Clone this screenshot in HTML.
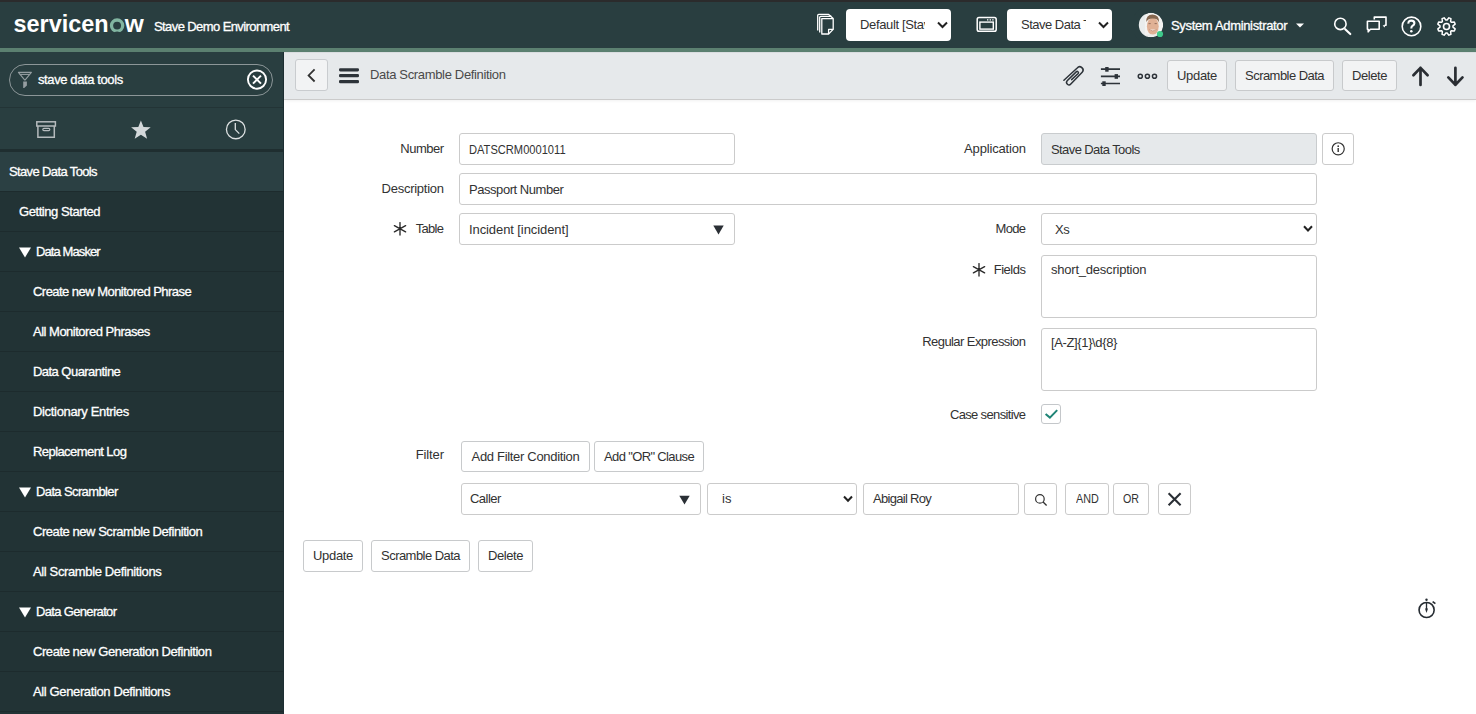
<!DOCTYPE html>
<html><head><meta charset="utf-8">
<style>
*{box-sizing:border-box;margin:0;padding:0}
html,body{width:1476px;height:714px;overflow:hidden;background:#fff;font-family:"Liberation Sans",sans-serif;font-size:13px;color:#323232}
.a{position:absolute}
.t{position:absolute;white-space:nowrap;letter-spacing:-0.5px;line-height:16px}
#strip{left:0;top:0;width:1476px;height:2px;background:#2b2b2c}
#hdr{left:0;top:2px;width:1476px;height:46px;background:#293e40}
#gline{left:0;top:48px;width:1476px;height:4px;background:#5b8070}
#side{left:0;top:52px;width:284px;height:662px;background:#293e40}
.sel{position:absolute;background:#fff;border-radius:4px;height:32px;top:7px;width:105px;overflow:hidden}
.sel span{position:absolute;top:8px;color:#323232}
.row{position:absolute;left:0;width:283px;height:40px;background:#223335;border-top:1px solid #1d2b2d}
.row span{position:absolute;top:12px;color:#fff;-webkit-text-stroke:0.3px #fff;white-space:nowrap;letter-spacing:-0.55px;line-height:16px}
#content{left:284px;top:52px;width:1192px;height:662px;background:#fff}
#chdr{left:0;top:0;width:1192px;height:48px;background:#e6e9eb;border-top:1px solid #dadde0;border-bottom:1px solid #cbcbcb;box-shadow:0 1px 3px rgba(0,0,0,.06)}
.btn{position:absolute;height:31px;border:1px solid #c8cacc;border-radius:3px;background:#fff;line-height:29px;text-align:center;white-space:nowrap;letter-spacing:-0.5px;color:#323232}
.hbtn{background:#f2f3f4}
.inp{position:absolute;height:32px;border:1px solid #cbcbcb;border-radius:3px;background:#fff}
.inp span{position:absolute;left:10px;top:7px;white-space:nowrap;letter-spacing:-0.5px;line-height:16px;color:#323232}
.lbl{position:absolute;white-space:nowrap;letter-spacing:-0.5px;line-height:16px;color:#323232;text-align:right}
</style></head><body>
<div id="strip" class="a"></div>
<div id="hdr" class="a"></div>
<svg class="a" style="left:0;top:0" width="300" height="48" viewBox="0 0 300 48">
  <text x="13.5" y="32" font-family="Liberation Sans" font-weight="700" font-size="24" fill="#fff" textLength="95" lengthAdjust="spacingAndGlyphs">servicen</text>
  <circle cx="117.1" cy="25.6" r="5.6" fill="none" stroke="#81b5a1" stroke-width="3.3"/>
  <ellipse cx="117.1" cy="33.4" rx="3.2" ry="1.9" fill="#293e40"/>
  <text x="124.8" y="32" font-family="Liberation Sans" font-weight="700" font-size="24" fill="#fff" textLength="19" lengthAdjust="spacingAndGlyphs">w</text>
</svg>
<span class="t" style="left:154px;top:19px;color:#fff;-webkit-text-stroke:0.3px #fff;letter-spacing:-0.59px">Stave Demo Environment</span>
<svg class="a" style="left:810px;top:8px" width="40" height="32" viewBox="810 8 40 32" fill="none" stroke="#fff" stroke-width="1.3" stroke-linejoin="round">
  <path d="M817.7 30.6 V15.4 Q817.7 14.4 818.7 14.4 H828.6 L831.3 16.6"/>
  <path d="M819.7 32.6 V17.2 Q819.7 16.3 820.7 16.3 H830.6 L833.2 18.6"/>
  <path d="M821.8 18.6 H833.2 V29.4 L828.6 34 H821.8 Z"/>
  <path d="M828.6 34 V29.4 H833.2"/>
</svg>
<div class="sel" style="left:846px;top:9px"><div class="a" style="left:14px;top:0;width:65px;height:32px;overflow:hidden"><span class="t" style="left:0;top:8px;letter-spacing:-0.35px;color:#323232">Default [Stave]</span></div>
  <svg class="a" style="left:91px;top:12px" width="11" height="8"><path d="M1 1.5 L5.5 6 L10 1.5" fill="none" stroke="#222" stroke-width="2"/></svg></div>
<svg class="a" style="left:970px;top:10px" width="32" height="28" viewBox="970 10 32 28" fill="none" stroke="#fff">
  <rect x="977.2" y="17.6" width="19" height="13.7" rx="1.8" stroke-width="1.5"/>
  <rect x="979.9" y="22.1" width="13.4" height="7" stroke-width="1.4"/>
  <path d="M987 19.8 h1.4 M989.6 19.8 h1.4 M992.2 19.8 h1.4" stroke-width="1.2"/>
</svg>
<div class="sel" style="left:1007px;top:9px"><div class="a" style="left:14px;top:0;width:65px;height:32px;overflow:hidden"><span class="t" style="left:0;top:8px;letter-spacing:-0.5px;color:#323232">Stave Data Tools</span></div>
  <svg class="a" style="left:91px;top:12px" width="11" height="8"><path d="M1 1.5 L5.5 6 L10 1.5" fill="none" stroke="#222" stroke-width="2"/></svg></div>
<svg class="a" style="left:1134px;top:8px" width="34" height="34" viewBox="1134 8 34 34">
    <circle cx="1151" cy="25" r="12.2" fill="#f4f3f1"/>
  <g>
    <path d="M1138 12 h7 v26 h-7z" fill="#e9ecec"/>
    <ellipse cx="1152.8" cy="26.3" rx="5.9" ry="8.6" fill="#e0b195"/>
    <path d="M1146.3 22 Q1145.8 15 1152.6 14.6 Q1159.6 15 1159.2 23 Q1158 18.6 1152.8 18.6 Q1148 18.6 1146.3 22z" fill="#86674f"/>
    <path d="M1148.5 23.6 h2.2 M1154.6 23.6 h2.2" stroke="#8d6a58" stroke-width="0.9"/>
    <path d="M1149 29.5 Q1152.8 32.5 1156.6 29.5" fill="#f4ece6" stroke="#c48d74" stroke-width="0.8"/>
    <path d="M1143 37 Q1145 33.5 1152.8 34.5 Q1160.5 33.5 1162 36z" fill="#ecebea"/>
  </g>
  <circle cx="1151" cy="25" r="15.7" fill="none" stroke="#293e40" stroke-width="7"/>
  <circle cx="1160" cy="34" r="3.1" fill="#3ec98a"/>
</svg>
<span class="t" style="left:1171px;top:18px;color:#fff;-webkit-text-stroke:0.3px #fff;letter-spacing:-0.33px">System Administrator</span>
<svg class="a" style="left:1295px;top:22px" width="10" height="8"><path d="M1 1.5 H9 L5 5.6z" fill="#fff"/></svg>
<svg class="a" style="left:1328px;top:12px" width="64" height="28" viewBox="1328 12 64 28" fill="none" stroke="#fff">
  <circle cx="1340.4" cy="23.9" r="5.7" stroke-width="1.6"/>
  <path d="M1345.2 29.2 L1350.3 34.1" stroke-width="2.1" stroke-linecap="round"/>
  <path d="M1367.4 21.3 H1379.2 V29.3 H1370.4 L1368.2 31.8 V29.3 H1367.4 Z" stroke-width="1.6" stroke-linejoin="round"/>
  <path d="M1374.3 19.6 V17.1 H1386 V25.2 H1384.5" stroke-width="1.6" stroke-linejoin="round"/>
  <path d="M1382.6 25.2 L1385.6 25.2 L1384.4 27.6Z" fill="#fff" stroke="none"/>
</svg>
<svg class="a" style="left:1396px;top:12px" width="64" height="28" viewBox="1396 12 64 28" fill="none" stroke="#fff">
  <circle cx="1411.5" cy="26.4" r="9.3" stroke-width="1.6"/>
  <path d="M1408.4 23.6 Q1408.3 20.6 1411.4 20.6 Q1414.4 20.6 1414.4 23.3 Q1414.4 24.9 1412.6 25.7 Q1411.3 26.4 1411.3 28.4" stroke-width="2.1"/>
  <circle cx="1411.3" cy="31.3" r="1.25" fill="#fff" stroke="none"/>
  <path d="M1452.97 27.12 L1455.17 28.91 L1454.33 30.93 L1451.52 30.63 L1450.63 31.52 L1450.93 34.33 L1448.91 35.17 L1447.12 32.97 L1445.88 32.97 L1444.09 35.17 L1442.07 34.33 L1442.37 31.52 L1441.48 30.63 L1438.67 30.93 L1437.83 28.91 L1440.03 27.12 L1440.03 25.88 L1437.83 24.09 L1438.67 22.07 L1441.48 22.37 L1442.37 21.48 L1442.07 18.67 L1444.09 17.83 L1445.88 20.03 L1447.12 20.03 L1448.91 17.83 L1450.93 18.67 L1450.63 21.48 L1451.52 22.37 L1454.33 22.07 L1455.17 24.09 L1452.97 25.88Z" stroke-width="1.5" stroke-linejoin="round"/>
  <circle cx="1446.5" cy="26.5" r="3.0" stroke-width="1.6"/>
</svg>
<div id="gline" class="a"></div>

<div id="side" class="a">
  <div class="a" style="left:9px;top:12px;width:264px;height:32px;border:1px solid #8c9698;border-radius:16px"></div>
  <span class="t" style="left:38px;top:20px;color:#fff;-webkit-text-stroke:0.3px #fff;letter-spacing:-0.39px">stave data tools</span>
  <svg class="a" style="left:0;top:-52px" width="284" height="200" viewBox="0 0 284 200">
    <g fill="none" stroke="#959ea1" stroke-width="1.1" stroke-linejoin="round">
      <path d="M18.4 72.4 H31.4 L25.2 79.9 H24.6 Z"/>
      <path d="M19.8 74.4 H30"/>
    </g>
    <path d="M23.2 81.4 H26.9 V85.6 L24.2 88 H23.2 Z" fill="#959ea1"/>
    <circle cx="257" cy="79.6" r="9.1" fill="none" stroke="#fff" stroke-width="1.9"/>
    <path d="M253 75.6 L261 83.6 M261 75.6 L253 83.6" stroke="#fff" stroke-width="2"/>
    <g fill="none" stroke="#b5bbbd" stroke-width="1.5">
      <rect x="36.8" y="121.8" width="18.6" height="4.2"/>
      <path d="M37.9 126 V137.2 H54.3 V126"/>
      <rect x="42.8" y="128.3" width="7" height="2.3" rx="1.15" stroke-width="1.2"/>
    </g>
    <path d="M140.9 120.4 L143.5 127 L150.7 127.3 L145.1 131.8 L147.1 138.8 L140.9 134.8 L134.7 138.8 L136.7 131.8 L131.1 127.3 L138.3 127z" fill="#d3d8da"/>
    <circle cx="235.8" cy="129.4" r="9.35" fill="none" stroke="#dde1e2" stroke-width="1.3"/>
    <path d="M235.3 123 V129.6 L239.3 133.6" fill="none" stroke="#dde1e2" stroke-width="1.3"/>
  </svg>
  <div class="a" style="left:0;top:55px;width:284px;height:1px;background:#233436"></div>
  <div class="a" style="left:0;top:97px;width:284px;height:3px;background:#1f2e30"></div>
  <div class="a" style="left:0;top:100px;width:284px;height:39px;background:#2b4043"></div>
  <span class="t" style="left:9px;top:112px;color:#fff;-webkit-text-stroke:0.3px #fff;letter-spacing:-0.63px">Stave Data Tools</span>
  <div class="row" style="top:139px"><span style="left:19px;letter-spacing:-0.43px">Getting Started</span></div>
<div class="row" style="top:179px"><svg class="a" style="left:19px;top:15px" width="12" height="11"><path d="M0 0.5 H12 L6 10.5z" fill="#fff"/></svg><span style="left:36px;letter-spacing:-0.9px">Data Masker</span></div>
<div class="row" style="top:219px"><span style="left:33px;letter-spacing:-0.54px">Create new Monitored Phrase</span></div>
<div class="row" style="top:259px"><span style="left:33px;letter-spacing:-0.5px">All Monitored Phrases</span></div>
<div class="row" style="top:299px"><span style="left:33px;letter-spacing:-0.54px">Data Quarantine</span></div>
<div class="row" style="top:339px"><span style="left:33px;letter-spacing:-0.33px">Dictionary Entries</span></div>
<div class="row" style="top:379px"><span style="left:33px;letter-spacing:-0.57px">Replacement Log</span></div>
<div class="row" style="top:419px"><svg class="a" style="left:19px;top:15px" width="12" height="11"><path d="M0 0.5 H12 L6 10.5z" fill="#fff"/></svg><span style="left:36px;letter-spacing:-0.62px">Data Scrambler</span></div>
<div class="row" style="top:459px"><span style="left:33px;letter-spacing:-0.45px">Create new Scramble Definition</span></div>
<div class="row" style="top:499px"><span style="left:33px;letter-spacing:-0.37px">All Scramble Definitions</span></div>
<div class="row" style="top:539px"><svg class="a" style="left:19px;top:15px" width="12" height="11"><path d="M0 0.5 H12 L6 10.5z" fill="#fff"/></svg><span style="left:36px;letter-spacing:-0.66px">Data Generator</span></div>
<div class="row" style="top:579px"><span style="left:33px;letter-spacing:-0.43px">Create new Generation Definition</span></div>
<div class="row" style="top:619px"><span style="left:33px;letter-spacing:-0.37px">All Generation Definitions</span></div>

  <div class="row" style="top:659px"></div>
  <div class="a" style="left:283px;top:0;width:1px;height:662px;background:#1d2e32"></div>
</div>

<div id="content" class="a">
  <div id="chdr" class="a"></div>
  <div class="a" style="left:11px;top:7px;width:33px;height:32px;border:1px solid #c9cccf;border-radius:3px;background:#f2f3f4"></div>
  <svg class="a" style="left:-284px;top:-52px" width="1476" height="100" viewBox="0 0 1476 100">
    <path d="M314.6 69.3 L308.6 75.4 L314.6 81.5" fill="none" stroke="#323232" stroke-width="1.8"/>
    <rect x="339" y="68.2" width="20" height="3.2" rx="1.3" fill="#2d3339"/><rect x="339" y="74.1" width="20" height="3.2" rx="1.3" fill="#2d3339"/><rect x="339" y="80" width="20" height="3.2" rx="1.3" fill="#2d3339"/>
    <path d="M1063.90 80.30 L1077.21 67.93 A3.3 3.3 0 0 1 1082.19 72.27 L1070.81 83.98 A2.4 2.4 0 0 1 1067.19 80.82 L1076.22 71.85 A1.3 1.3 0 0 1 1078.18 73.55 L1071.60 79.60" fill="none" stroke="#2d3339" stroke-width="1.5" stroke-linecap="round"/>
    <path d="M1100.9 69.2 H1120 M1100.9 76.3 H1120 M1100.9 83.5 H1120" stroke="#2d3339" stroke-width="1.7"/>
    <rect x="1105.2" y="67" width="3.4" height="4.7" fill="#2d3339"/>
    <rect x="1114.6" y="74.1" width="3.4" height="4.7" fill="#2d3339"/>
    <rect x="1102.3" y="81.3" width="3.4" height="4.7" fill="#2d3339"/>
    <g fill="none" stroke="#2d3339" stroke-width="1.5"><circle cx="1140.3" cy="76.3" r="2.05"/><circle cx="1147.4" cy="76.3" r="2.05"/><circle cx="1154.5" cy="76.3" r="2.05"/></g>
    <g fill="none" stroke="#2a2e33" stroke-width="2.7" stroke-linecap="round" stroke-linejoin="round">
      <path d="M1420.5 67.8 V84.9 M1413.4 75.3 L1420.5 67.9 L1427.6 75.3"/>
      <path d="M1455.4 67.8 V84.9 M1448.3 77.4 L1455.4 84.8 L1462.5 77.4"/>
    </g>
  </svg>
  <span class="t" style="left:86px;top:15px;color:#4a4a4a;letter-spacing:-0.34px">Data Scramble Definition</span>
  <div class="btn hbtn" style="left:883px;top:8px;width:60px;letter-spacing:-0.34px">Update</div>
  <div class="btn hbtn" style="left:951px;top:8px;width:99px;letter-spacing:-0.55px">Scramble Data</div>
  <div class="btn hbtn" style="left:1058px;top:8px;width:55px;letter-spacing:-0.42px">Delete</div>

</div>
<div id="form">
<span class="t" style="right:1032.52px;top:141px;letter-spacing:-0.52px;color:#323232">Number</span>
<span class="t" style="right:1032.26px;top:181px;letter-spacing:-0.26px;color:#323232">Description</span>
<span class="t" style="right:1032.72px;top:221px;letter-spacing:-0.72px;color:#323232">Table</span>
<span class="t" style="right:450.17px;top:141px;letter-spacing:-0.17px;color:#323232">Application</span>
<span class="t" style="right:450.70px;top:221px;letter-spacing:-0.7px;color:#323232">Mode</span>
<span class="t" style="right:450.48px;top:262px;letter-spacing:-0.48px;color:#323232">Fields</span>
<span class="t" style="right:450.57px;top:334px;letter-spacing:-0.57px;color:#323232">Regular Expression</span>
<span class="t" style="right:450.65px;top:407px;letter-spacing:-0.65px;color:#323232">Case sensitive</span>
<span class="t" style="right:1032.14px;top:447px;letter-spacing:-0.14px;color:#323232">Filter</span>
<svg class="a" style="left:393.2px;top:222.2px" width="14" height="14" viewBox="0 0 14 14"><path d="M7 0.6 V13 M1.4 3.6 L12.6 9.9 M12.6 3.6 L1.4 9.9" stroke="#2a2a2a" stroke-width="1.35" stroke-linecap="round"/></svg>
<svg class="a" style="left:972.3px;top:262.9px" width="14" height="14" viewBox="0 0 14 14"><path d="M7 0.6 V13 M1.4 3.6 L12.6 9.9 M12.6 3.6 L1.4 9.9" stroke="#2a2a2a" stroke-width="1.35" stroke-linecap="round"/></svg>
<div class="a" style="left:459px;top:133px;width:276px;height:32px;background:#fff;border:1px solid #cbcbcb;border-radius:3px"></div>
<span class="t" style="left:469px;top:142px;letter-spacing:0;color:#323232;transform:scaleX(0.855);transform-origin:0 0">DATSCRM0001011</span>
<div class="a" style="left:459px;top:173px;width:858px;height:32px;background:#fff;border:1px solid #cbcbcb;border-radius:3px"></div>
<span class="t" style="left:469px;top:182px;letter-spacing:-0.45px;color:#323232">Passport Number</span>
<div class="a" style="left:459px;top:213px;width:276px;height:32px;background:#fff;border:1px solid #cbcbcb;border-radius:3px"></div>
<span class="t" style="left:469px;top:222px;letter-spacing:-0.09px;color:#323232">Incident [incident]</span>
<svg class="a" style="left:713px;top:225px" width="11" height="10"><path d="M0.3 0.5 H10.7 L5.5 9.5z" fill="#2a2f35"/></svg>
<div class="a" style="left:1041px;top:133px;width:276px;height:32px;background:#e6e9eb;border:1px solid #c9ccce;border-radius:3px"></div>
<span class="t" style="left:1051px;top:142px;letter-spacing:-0.59px;color:#323232">Stave Data Tools</span>
<div class="a" style="left:1322px;top:133px;width:32px;height:32px;background:#fff;border:1px solid #cbcbcb;border-radius:3px"></div>
<svg class="a" style="left:1330px;top:141px" width="17" height="17" viewBox="0 0 17 17"><circle cx="8.2" cy="7.8" r="6.05" fill="none" stroke="#323232" stroke-width="1.2"/><circle cx="8.2" cy="5.2" r="0.85" fill="#323232"/><path d="M8.2 7.1 V11.1" stroke="#323232" stroke-width="1.4"/></svg>
<div class="a" style="left:1041px;top:213px;width:276px;height:32px;background:#fff;border:1px solid #cbcbcb;border-radius:3px"></div>
<span class="t" style="left:1055px;top:222px;letter-spacing:-0.3px;color:#323232">Xs</span>
<svg class="a" style="left:1303px;top:225px" width="11" height="8"><path d="M1 1.3 L5 5.5 L9 1.3" fill="none" stroke="#222" stroke-width="2"/></svg>
<div class="a" style="left:1041px;top:255px;width:276px;height:63px;background:#fff;border:1px solid #cbcbcb;border-radius:3px"></div>
<span class="t" style="left:1051px;top:262px;letter-spacing:-0.22px;color:#323232">short_description</span>
<div class="a" style="left:1041px;top:328px;width:276px;height:63px;background:#fff;border:1px solid #cbcbcb;border-radius:3px"></div>
<span class="t" style="left:1051px;top:335px;letter-spacing:-0.37px;color:#323232">[A-Z]{1}\d{8}</span>
<div class="a" style="left:1041px;top:404px;width:20px;height:20px;background:#fff;border:1px solid #c4c7ca;border-radius:3px"></div>
<svg class="a" style="left:1044px;top:407px" width="14" height="14" viewBox="0 0 14 14"><path d="M1.6 6.9 L5.9 10.6 L13.2 3.1" fill="none" stroke="#1f8476" stroke-width="2"/></svg>
<div class="btn" style="left:461px;top:441px;width:129px;height:31px;line-height:29px;letter-spacing:-0.32px;background:#fff">Add Filter Condition</div>
<div class="btn" style="left:594px;top:441px;width:110px;height:31px;line-height:29px;letter-spacing:-0.64px;background:#fff">Add &quot;OR&quot; Clause</div>
<div class="a" style="left:461px;top:483px;width:240px;height:32px;background:#fff;border:1px solid #cbcbcb;border-radius:3px"></div>
<span class="t" style="left:470px;top:491px;letter-spacing:-0.52px;color:#323232">Caller</span>
<svg class="a" style="left:679px;top:495px" width="11" height="10"><path d="M0.3 0.8 H10.7 L5.5 9.5z" fill="#2a2f35"/></svg>
<div class="a" style="left:707px;top:483px;width:150px;height:32px;background:#fff;border:1px solid #cbcbcb;border-radius:3px"></div>
<span class="t" style="left:722px;top:491px;letter-spacing:0px;color:#323232">is</span>
<svg class="a" style="left:843px;top:495px" width="11" height="9"><path d="M1 1.5 L5 5.7 L9 1.5" fill="none" stroke="#222" stroke-width="2"/></svg>
<div class="a" style="left:863px;top:483px;width:156px;height:32px;background:#fff;border:1px solid #cbcbcb;border-radius:3px"></div>
<span class="t" style="left:873px;top:491px;letter-spacing:-0.7px;color:#323232">Abigail Roy</span>
<div class="a" style="left:1024px;top:483px;width:33px;height:32px;background:#fff;border:1px solid #cbcbcb;border-radius:3px"></div>
<svg class="a" style="left:1033px;top:492px" width="16" height="16" viewBox="0 0 16 16"><circle cx="6.9" cy="6.9" r="4.3" fill="none" stroke="#323232" stroke-width="1.2"/><path d="M10.1 10.1 L13.6 13.6" stroke="#323232" stroke-width="1.4"/></svg>
<div class="a" style="left:1065px;top:483px;width:44px;height:32px;background:#fff;border:1px solid #cbcbcb;border-radius:3px"></div>
<span class="t" style="left:1075.5px;top:491px;letter-spacing:0;color:#323232;transform:scaleX(0.83);transform-origin:0 0">AND</span>
<div class="a" style="left:1113px;top:483px;width:36px;height:32px;background:#fff;border:1px solid #cbcbcb;border-radius:3px"></div>
<span class="t" style="left:1122.6px;top:491px;letter-spacing:0;color:#323232;transform:scaleX(0.82);transform-origin:0 0">OR</span>
<div class="a" style="left:1158px;top:483px;width:33px;height:32px;background:#fff;border:1px solid #cbcbcb;border-radius:3px"></div>
<svg class="a" style="left:1166px;top:491px" width="17" height="17" viewBox="0 0 17 17"><path d="M2.6 2.3 L14.6 14.3 M14.6 2.3 L2.6 14.3" stroke="#2a2f35" stroke-width="2.1"/></svg>
<div class="btn" style="left:303px;top:540px;width:60px;height:32px;line-height:30px;letter-spacing:-0.34px;background:#fff">Update</div>
<div class="btn" style="left:371px;top:540px;width:99px;height:32px;line-height:30px;letter-spacing:-0.55px;background:#fff">Scramble Data</div>
<div class="btn" style="left:478px;top:540px;width:55px;height:32px;line-height:30px;letter-spacing:-0.42px;background:#fff">Delete</div>
<svg class="a" style="left:1410px;top:592px" width="32" height="32" viewBox="1410 592 32 32"><circle cx="1426.6" cy="610" r="7.55" fill="none" stroke="#262c32" stroke-width="1.6"/><circle cx="1426.5" cy="599.8" r="1.2" fill="#262c32"/><path d="M1426.5 602.5 V609" stroke="#262c32" stroke-width="1.3"/><path d="M1425 608.4 L1426.5 613 L1428 608.4z" fill="#262c32"/><path d="M1432.6 601.6 L1435.4 603.6" stroke="#262c32" stroke-width="1.7"/></svg>
</div>
</body></html>
